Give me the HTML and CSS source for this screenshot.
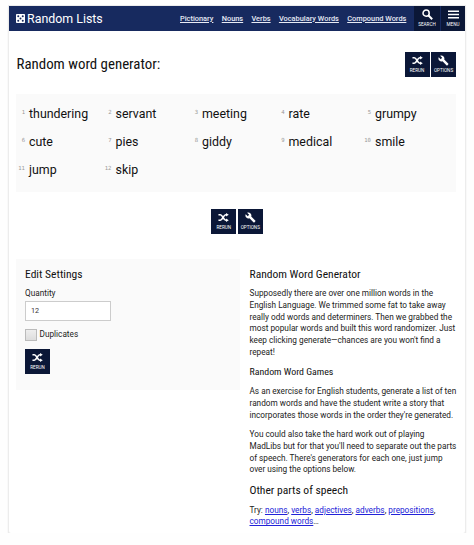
FILE: index.html
```html
<!DOCTYPE html>
<html lang="en">
<head>
    <meta charset="UTF-8">
    <meta name="viewport" content="width=device-width, initial-scale=1.0">
    <title>Random Word Generator</title>
    <link rel="stylesheet" href="styles.css">
</head>
<body>
    <!-- shared icons -->
    <svg class="sprite" width="0" height="0">
        <symbol id="shuffle" viewBox="0 0 24 20">
            <path d="M1 4h4c5 0 7 12 12 12h2M1 16h4c5 0 7-12 12-12h2" fill="none" stroke="currentColor" stroke-width="3.4"/>
            <path d="M17.500 0l6 4-6 4zM17.500 12l6 4-6 4z" fill="currentColor"/>
        </symbol>
        <symbol id="wrench" viewBox="0 0 24 24">
            <path d="M22.700 19l-9.100-9.100c.9-2.300.4-5-1.500-6.900-2-2-5-2.400-7.400-1.300L9 6 6 9 1.600 4.700C.4 7.100.9 10.100 2.900 12.100c1.900 1.900 4.600 2.400 6.900 1.500l9.100 9.100c.4.4 1 .4 1.400 0l2.300-2.300c.5-.4.5-1.100.1-1.400z" fill="currentColor"/>
        </symbol>
    </svg>

    <div class="page">
        <header>
            <a class="logo" href="#">
                <svg viewBox="0 0 18 18">
                    <rect width="18" height="18" rx="1.500" fill="#fff"/>
                    <g fill="#172a5f">
                        <circle cx="4.500" cy="4.500" r="2"/>
                        <circle cx="13.500" cy="4.500" r="2"/>
                        <circle cx="9" cy="9" r="2"/>
                        <circle cx="4.500" cy="13.500" r="2"/>
                        <circle cx="13.500" cy="13.500" r="2"/>
                    </g>
                </svg>
                <span>Random Lists</span>
            </a>
            <nav>
                <a href="#">Pictionary</a>
                <a href="#">Nouns</a>
                <a href="#">Verbs</a>
                <a href="#">Vocabulary Words</a>
                <a href="#">Compound Words</a>
            </nav>
            <button class="btn search">
                <svg viewBox="0 0 20 20"><circle cx="7.500" cy="7.500" r="5.600" fill="none" stroke="currentColor" stroke-width="2.800"/><path d="M11.500 11.500l7 7" stroke="currentColor" stroke-width="3.600"/></svg>
                <span>SEARCH</span>
            </button>
            <button class="btn menu">
                <svg viewBox="0 0 20 16"><path d="M0 2h20M0 8h20M0 14h20" stroke="currentColor" stroke-width="2.600"/></svg>
                <span>MENU</span>
            </button>
        </header>

        <div class="title">
            <h1>Random word generator:</h1>
            <div class="buttons">
                <button class="btn"><svg><use href="#shuffle"/></svg><span>RERUN</span></button>
                <button class="btn"><svg><use href="#wrench"/></svg><span>OPTIONS</span></button>
            </div>
        </div>

        <ol class="words">
            <li>thundering</li>
            <li>servant</li>
            <li>meeting</li>
            <li>rate</li>
            <li>grumpy</li>
            <li>cute</li>
            <li>pies</li>
            <li>giddy</li>
            <li>medical</li>
            <li>smile</li>
            <li>jump</li>
            <li>skip</li>
        </ol>

        <div class="buttons center">
            <button class="btn"><svg><use href="#shuffle"/></svg><span>RERUN</span></button>
            <button class="btn"><svg><use href="#wrench"/></svg><span>OPTIONS</span></button>
        </div>

        <div class="columns">
            <form class="settings">
                <h2>Edit Settings</h2>
                <label for="qty">Quantity</label>
                <input type="text" id="qty" value="12">
                <label class="check"><input type="checkbox"> <span>Duplicates</span></label>
                <button type="button" class="btn"><svg><use href="#shuffle"/></svg><span>RERUN</span></button>
            </form>

            <div class="about">
                <h2>Random Word Generator</h2>
                <p>Supposedly there are over one million words in the<br>English Language. We trimmed some fat to take away<br>really odd words and determiners. Then we grabbed the<br>most popular words and built this word randomizer. Just<br>keep clicking generate—chances are you won't find a<br>repeat!</p>
                <h3>Random Word Games</h3>
                <p>As an exercise for English students, generate a list of ten<br>random words and have the student write a story that<br>incorporates those words in the order they're generated.</p>
                <p>You could also take the hard work out of playing<br>MadLibs but for that you'll need to separate out the parts<br>of speech. There's generators for each one, just jump<br>over using the options below.</p>
                <h2 class="other">Other parts of speech</h2>
                <p>Try: <a href="#">nouns</a>, <a href="#">verbs</a>, <a href="#">adjectives</a>, <a href="#">adverbs</a>, <a href="#">prepositions</a>,<br><a href="#">compound words</a>…</p>
            </div>
        </div>
    </div>
</body>
</html>
```
FILE: styles.css
```css
* {
    box-sizing: border-box;
}
body {
    margin: 0;
    padding: 6px 9px 0;
    background: #fefefe;
    color: #222;
    font-family: Roboto, sans-serif;
    font-size: 8.24px;
    line-height: 11.65px;
}
.sprite {
    position: absolute;
}
.page {
    width: 456px;
    height: 527px;
    background: #fff;
    border-radius: 0 0 2px 2px;
    box-shadow: 0 0 0 1px #ececec, 0 1px 2px rgba(0, 0, 0, 0.4);
}
header {
    display: flex;
    height: 25px;
    background: #172a5f;
}
.logo {
    display: flex;
    align-items: center;
    width: 171px;
    padding-left: 7px;
    gap: 2px;
    color: #fff;
    font-size: 12.4px;
    text-decoration: none;
}
.logo svg {
    width: 9px;
    height: 9px;
}
nav {
    display: flex;
    flex: 1;
    align-items: center;
    gap: 8.3px;
    white-space: nowrap;
}
nav a {
    color: #e8ebf5;
    font-size: 7.4px;
    font-weight: 500;
}
.btn {
    display: flex;
    flex-direction: column;
    align-items: center;
    width: 25px;
    height: 25px;
    margin: 0;
    padding: 3px 0 0;
    border: 0;
    background: #0b1737;
    color: #fff;
    font-family: Roboto, sans-serif;
    font-size: 4.6px;
    line-height: 6px;
    cursor: pointer;
}
.btn svg {
    width: 11px;
    height: 11px;
    margin-bottom: 2px;
}
.btn.search {
    width: 26px;
}
.btn.menu {
    width: 24px;
    margin-left: 1px;
}
.buttons {
    display: flex;
    gap: 1.5px;
}
.title {
    display: flex;
    justify-content: space-between;
    align-items: center;
    height: 25px;
    margin: 21px 9px 17px 7.5px;
}
h1, h2, h3 {
    margin: 0;
    color: #111;
    font-family: "Roboto Condensed", Roboto, sans-serif;
    font-stretch: 75%;
    font-weight: 400;
    white-space: nowrap;
}
h1 {
    font-size: 14.9px;
}
h2 {
    font-size: 11.55px;
    line-height: 14px;
}
h3 {
    margin: 7px 0 8px;
    font-size: 9.9px;
    line-height: 12px;
}
.words {
    display: grid;
    grid-template-columns: repeat(5, 86.5px);
    grid-auto-rows: 27.8px;
    height: 98px;
    margin: 0 9px 0 7px;
    padding: 6px 0 0;
    background: #fafafa;
    color: #111;
    font-size: 12.4px;
    line-height: 27.8px;
    list-style: none;
    counter-reset: word;
}
.words li {
    display: flex;
    counter-increment: word;
}
.words li::before {
    content: counter(word);
    width: 9px;
    margin-right: 4px;
    color: #999;
    font-family: "DejaVu Sans Mono", monospace;
    font-size: 5.6px;
    line-height: 25px;
    text-align: right;
}
.center {
    justify-content: center;
    margin: 17px 0 25px;
}
.columns {
    display: flex;
    align-items: flex-start;
    margin-left: 7px;
}
.settings {
    width: 224px;
    height: 131px;
    padding: 8px 9px;
    background: #fafafa;
}
.settings label {
    display: block;
    margin-top: 7px;
}
.settings input[type="text"] {
    display: block;
    width: 86px;
    height: 20px;
    margin: 1px 0 8px;
    padding: 0 5px;
    border: 1px solid #ccc;
    background: #fff;
    color: #333;
    font-family: Roboto, sans-serif;
    font-size: 7.2px;
}
.settings .check {
    display: flex;
    align-items: center;
    gap: 2.5px;
    height: 12px;
    margin: 0 0 8px;
}
.check input {
    width: 12px;
    height: 12px;
    margin: 0;
    border: 1px solid #bbb;
    background: linear-gradient(#eee, #ddd);
    appearance: none;
}
.about {
    padding: 8px 0 0 9.5px;
    white-space: nowrap;
}
.about p {
    margin: 7.3px 0 8px;
}
.about a {
    color: #2222d8;
}
.about .other {
    margin: -1px 0 8px;
}
```
